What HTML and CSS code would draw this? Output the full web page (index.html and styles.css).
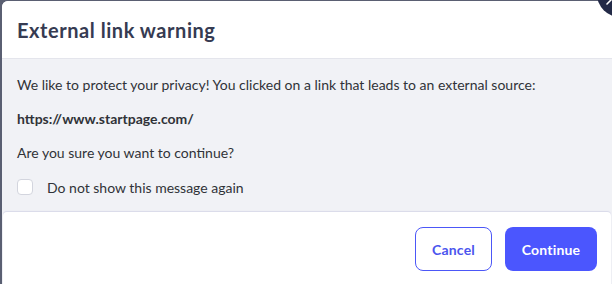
FILE: index.html
```html
<!DOCTYPE html>
<html>
<head>
<meta charset="utf-8">
<link rel="stylesheet" href="styles.css">
</head>
<body>
<div class="modal">
  <div class="header">
    <h2 class="title">External link warning</h2>
  </div>
  <div class="content">
    <p class="line">We like to protect your privacy! You clicked on a link that leads to an external source:</p>
    <p class="line url">https://www.startpage.com/</p>
    <p class="line">Are you sure you want to continue?</p>
    <label class="check">
      <span class="box"></span>
      <span class="check-label">Do not show this message again</span>
    </label>
  </div>
  <div class="footer">
    <button class="btn btn-outline">Cancel</button>
    <button class="btn btn-primary">Continue</button>
  </div>
</div>
<div class="close">
  <svg width="46" height="46" viewBox="0 0 46 46"><path d="M10 33 L14 29" stroke="#ffffff" stroke-width="1.6" stroke-linecap="round"/></svg>
</div>
</body>
</html>
```

FILE: styles.css
```css
html, body {
  margin: 0;
  padding: 0;
  height: 100%;
}
body {
  background: #5a5f72;
  overflow: hidden;
  font-family: "Lato", "Liberation Sans", sans-serif;
  position: relative;
}
.modal {
  margin: 1px 0 0 2px;
  width: 610px;
  height: 290px;
  background: #f1f2f6;
  border-radius: 6px 6px 0 0;
  display: flex;
  flex-direction: column;
  overflow: hidden;
}
.header {
  height: 57px;
  flex: none;
  background: #ffffff;
  border-bottom: 1px solid #e4e5ec;
  display: flex;
  align-items: center;
  padding-left: 15px;
}
.title {
  margin: 0;
  font-size: 20px;
  font-weight: 700;
  color: #363b52;
  letter-spacing: 0.55px;
}
.content {
  padding: 16px 15px 0 15px;
  height: 137px;
  flex: none;
  color: #303238;
  font-size: 14px;
}
.line {
  margin: 0 0 14px 0;
  line-height: 20px;
}
.url {
  font-weight: 700;
}
.check {
  display: flex;
  align-items: center;
  gap: 14px;
  height: 20px;
}
.box {
  width: 14px;
  height: 14px;
  border: 1px solid #d3d5de;
  border-radius: 4px;
  background: #ffffff;
}
.footer {
  flex: 1;
  margin: 0 1px;
  background: #ffffff;
  border-radius: 4px 4px 0 0;
  box-shadow: 0 -1px 1px rgba(200, 202, 225, 0.6);
  display: flex;
  justify-content: flex-end;
  align-items: flex-start;
  gap: 13px;
  padding: 15px 14px 0 0;
}
.btn {
  height: 44px;
  border-radius: 8px;
  font-family: inherit;
  font-size: 14px;
  font-weight: 700;
  cursor: pointer;
  padding: 0;
  letter-spacing: 0.2px;
}
.btn-outline {
  width: 77px;
  background: #ffffff;
  border: 1px solid #4c57f7;
  color: #4b55ee;
}
.btn-primary {
  width: 92px;
  background: #4b56fe;
  border: none;
  color: #ffffff;
}
.close {
  position: absolute;
  left: 597px;
  top: -29px;
  width: 46px;
  height: 46px;
  border-radius: 50%;
  background: #232a47;
}
.close svg {
  display: block;
}
```
